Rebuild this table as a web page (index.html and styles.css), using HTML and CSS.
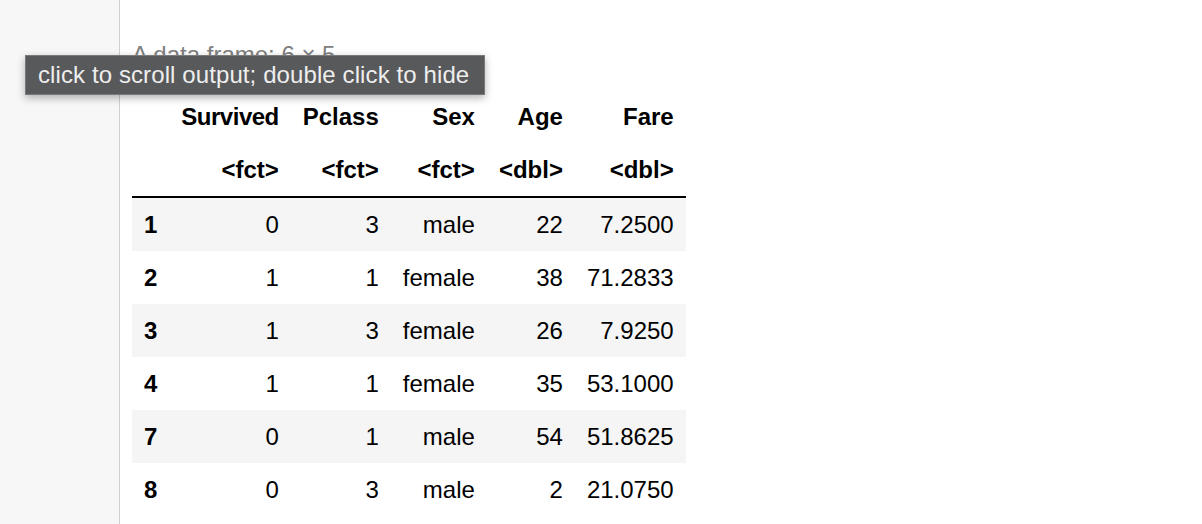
FILE: index.html
```html
<!DOCTYPE html>
<html>
<head>
<meta charset="utf-8">
<link rel="stylesheet" href="styles.css">
</head>
<body>
<div class="page">
  <div class="gutter"></div>
  <div class="output">
    <table class="df">
      <caption>A data frame: 6 × 5</caption>
      <thead>
        <tr><th></th><th class="tight">Survived</th><th>Pclass</th><th>Sex</th><th>Age</th><th>Fare</th></tr>
        <tr class="types"><th></th><th>&lt;fct&gt;</th><th>&lt;fct&gt;</th><th>&lt;fct&gt;</th><th>&lt;dbl&gt;</th><th>&lt;dbl&gt;</th></tr>
      </thead>
      <tbody>
        <tr><th>1</th><td>0</td><td>3</td><td>male</td><td>22</td><td>7.2500</td></tr>
        <tr><th>2</th><td>1</td><td>1</td><td>female</td><td>38</td><td>71.2833</td></tr>
        <tr><th>3</th><td>1</td><td>3</td><td>female</td><td>26</td><td>7.9250</td></tr>
        <tr><th>4</th><td>1</td><td>1</td><td>female</td><td>35</td><td>53.1000</td></tr>
        <tr><th>7</th><td>0</td><td>1</td><td>male</td><td>54</td><td>51.8625</td></tr>
        <tr><th>8</th><td>0</td><td>3</td><td>male</td><td>2</td><td>21.0750</td></tr>
      </tbody>
    </table>
  </div>
  <div class="tooltip">click to scroll output; double click to hide</div>
</div>
</body>
</html>
```

FILE: styles.css
```css
html, body {
  margin: 0;
  padding: 0;
  background: #fff;
}
.page {
  position: relative;
  display: flex;
  height: 524px;
  overflow: hidden;
  font-family: "Liberation Sans", Arial, Helvetica, sans-serif;
}
.gutter {
  width: 119px;
  flex: none;
  background: #f7f7f7;
  border-right: 1px solid #cfcfcf;
}
.output {
  padding: 0 0 0 12px;
}
.df {
  border-collapse: collapse;
  border-spacing: 0;
  font-size: 24px;
  color: #000;
}
.df caption {
  text-align: left;
  color: #808080;
  font-size: 24px;
  line-height: 28px;
  padding: 41px 0 21px 0;
}
.df th, .df td {
  padding: 14px 12px;
  line-height: 25px;
  text-align: right;
  white-space: nowrap;
}
.df thead th {
  font-weight: bold;
}
.df thead th.tight {
  letter-spacing: -0.5px;
}
.df thead tr.types th {
  border-bottom: 2px solid #000;
}
.df tbody th {
  text-align: left;
  font-weight: bold;
}
.df tbody tr:nth-child(odd) {
  background: #f5f5f5;
}
.tooltip {
  position: absolute;
  left: 25px;
  top: 55px;
  width: 458px;
  height: 38px;
  box-sizing: content-box;
  background: #58595b;
  border: 1px solid #7a7a7a;
  color: #eeeeee;
  font-size: 24px;
  letter-spacing: 0.1px;
  line-height: 38px;
  padding: 0;
  text-indent: 12px;
  box-shadow: 0 3px 8px rgba(0, 0, 0, 0.3);
  white-space: nowrap;
}
```
